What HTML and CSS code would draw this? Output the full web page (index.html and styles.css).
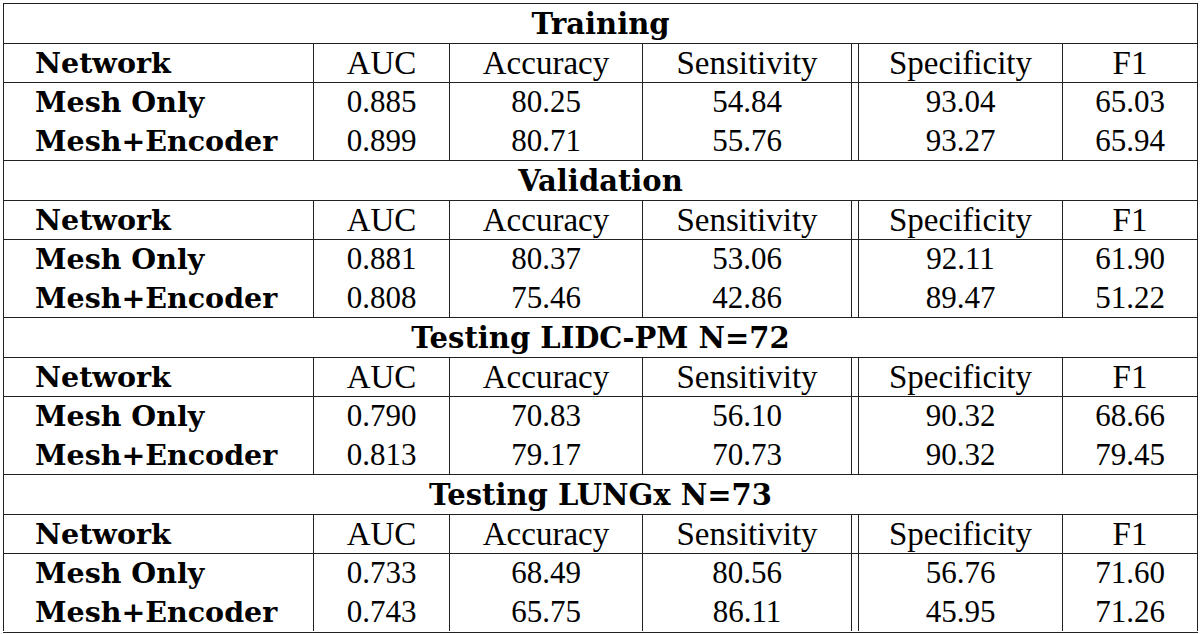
FILE: index.html
```html
<!DOCTYPE html>
<html>
<head>
<meta charset="utf-8">
<link rel="stylesheet" href="styles.css">
</head>
<body>
<div class="wrap">
<table class="results">
<colgroup>
<col class="c-net"><col class="c-auc"><col class="c-acc"><col class="c-sen"><col class="c-gap"><col class="c-spe"><col class="c-f1">
</colgroup>
<tbody>
<tr class="title"><td colspan="7">Training</td></tr>
<tr class="head"><td class="net">Network</td><td>AUC</td><td>Accuracy</td><td>Sensitivity</td><td class="gap"></td><td>Specificity</td><td>F1</td></tr>
<tr class="data"><td class="net">Mesh Only</td><td>0.885</td><td>80.25</td><td>54.84</td><td class="gap"></td><td>93.04</td><td>65.03</td></tr>
<tr class="data"><td class="net">Mesh+Encoder</td><td>0.899</td><td>80.71</td><td>55.76</td><td class="gap"></td><td>93.27</td><td>65.94</td></tr>
<tr class="title"><td colspan="7">Validation</td></tr>
<tr class="head"><td class="net">Network</td><td>AUC</td><td>Accuracy</td><td>Sensitivity</td><td class="gap"></td><td>Specificity</td><td>F1</td></tr>
<tr class="data"><td class="net">Mesh Only</td><td>0.881</td><td>80.37</td><td>53.06</td><td class="gap"></td><td>92.11</td><td>61.90</td></tr>
<tr class="data"><td class="net">Mesh+Encoder</td><td>0.808</td><td>75.46</td><td>42.86</td><td class="gap"></td><td>89.47</td><td>51.22</td></tr>
<tr class="title"><td colspan="7">Testing LIDC-PM N=72</td></tr>
<tr class="head"><td class="net">Network</td><td>AUC</td><td>Accuracy</td><td>Sensitivity</td><td class="gap"></td><td>Specificity</td><td>F1</td></tr>
<tr class="data"><td class="net">Mesh Only</td><td>0.790</td><td>70.83</td><td>56.10</td><td class="gap"></td><td>90.32</td><td>68.66</td></tr>
<tr class="data"><td class="net">Mesh+Encoder</td><td>0.813</td><td>79.17</td><td>70.73</td><td class="gap"></td><td>90.32</td><td>79.45</td></tr>
<tr class="title"><td colspan="7">Testing LUNGx N=73</td></tr>
<tr class="head"><td class="net">Network</td><td>AUC</td><td>Accuracy</td><td>Sensitivity</td><td class="gap"></td><td>Specificity</td><td>F1</td></tr>
<tr class="data"><td class="net">Mesh Only</td><td>0.733</td><td>68.49</td><td>80.56</td><td class="gap"></td><td>56.76</td><td>71.60</td></tr>
<tr class="data"><td class="net">Mesh+Encoder</td><td>0.743</td><td>65.75</td><td>86.11</td><td class="gap"></td><td>45.95</td><td>71.26</td></tr>
</tbody>
</table>
</div>
</body>
</html>
```
FILE: styles.css
```css
html, body {
  margin: 0;
  padding: 0;
  background: #fff;
}
body {
  padding: 3px 0 0 3px;
}
.wrap {
  width: 1195px;
  border-bottom: 1px solid #222;
  padding-bottom: 1px;
}
.results {
  border-collapse: collapse;
  table-layout: fixed;
  width: 1195px;
  font-family: "Liberation Serif", "Times New Roman", serif;
  font-size: 31px;
  color: #000;
}
.c-net { width: 310px; }
.c-auc { width: 136px; }
.c-acc { width: 193px; }
.c-sen { width: 209px; }
.c-gap { width: 7px; }
.c-spe { width: 204px; }
.c-f1 { width: 135px; }
.results td {
  padding: 0;
  text-align: center;
  vertical-align: middle;
  border-left: 1px solid #222;
  border-right: 1px solid #222;
  white-space: nowrap;
  overflow: hidden;
}
.results tr.title td {
  border-top: 1px solid #222;
  border-bottom: 1px solid #222;
  height: 39px;
  font-family: "DejaVu Serif", "Liberation Serif", serif;
  font-weight: bold;
  font-size: 29px;
}
.results tr.head td {
  border-bottom: 1px solid #222;
  height: 38px;
  font-size: 33px;
}
.results tr.data td {
  height: 38.5px;
}
.results td.net {
  text-align: left;
  padding-left: 31px;
  font-family: "DejaVu Serif", "Liberation Serif", serif;
  font-weight: bold;
  font-size: 28.5px;
}
.results tr.head td.net {
  font-size: 28.5px;
}
.results td.gap {
  padding: 0;
}
```
